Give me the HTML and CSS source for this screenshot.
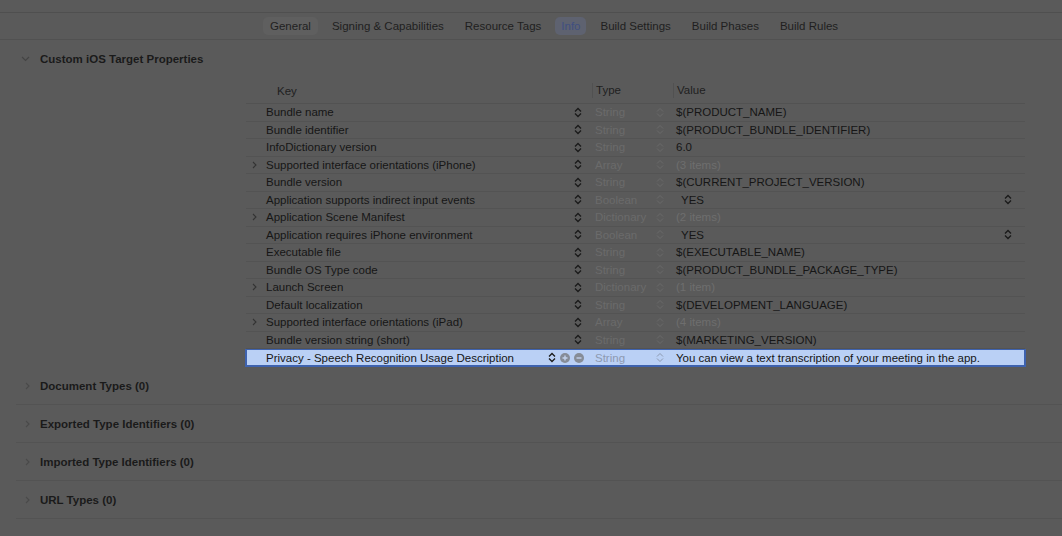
FILE: index.html
```html
<!DOCTYPE html>
<html>
<head>
<meta charset="utf-8">
<link rel="stylesheet" href="styles.css">
</head>
<body>
<div class="topstrip"></div>
<nav class="tabs">
  <span class="tab pill">General</span>
  <span class="tab">Signing &amp; Capabilities</span>
  <span class="tab">Resource Tags</span>
  <span class="tab pill info">Info</span>
  <span class="tab">Build Settings</span>
  <span class="tab">Build Phases</span>
  <span class="tab">Build Rules</span>
</nav>

<section class="custom">
  <div class="sechead">
    <svg class="chev-down" width="9" height="6" viewBox="0 0 9 6"><path d="M1 1 L4.5 4.5 L8 1" fill="none" stroke="#444" stroke-width="1.2"/></svg>
    <span class="sectitle">Custom iOS Target Properties</span>
  </div>

  <div class="table">
    <div class="thead">
      <div class="hkey">Key</div>
      <div class="htype">Type</div>
      <div class="hval">Value</div>
    </div>

    <div class="row"><div class="key"><span class="disc"></span><span class="ktext">Bundle name</span><span class="ctl"><svg class="step" width="8" height="11" viewBox="0 0 8 11"><path d="M1 4.5L4 1.5L7 4.5M1 6.5L4 9.5L7 6.5"/></svg></span></div><div class="type"><span>String</span><svg class="step faded" width="8" height="11" viewBox="0 0 8 11"><path d="M1 4.5L4 1.5L7 4.5M1 6.5L4 9.5L7 6.5"/></svg></div><div class="val">$(PRODUCT_NAME)</div></div>

    <div class="row"><div class="key"><span class="disc"></span><span class="ktext">Bundle identifier</span><span class="ctl"><svg class="step" width="8" height="11" viewBox="0 0 8 11"><path d="M1 4.5L4 1.5L7 4.5M1 6.5L4 9.5L7 6.5"/></svg></span></div><div class="type"><span>String</span><svg class="step faded" width="8" height="11" viewBox="0 0 8 11"><path d="M1 4.5L4 1.5L7 4.5M1 6.5L4 9.5L7 6.5"/></svg></div><div class="val">$(PRODUCT_BUNDLE_IDENTIFIER)</div></div>

    <div class="row"><div class="key"><span class="disc"></span><span class="ktext">InfoDictionary version</span><span class="ctl"><svg class="step" width="8" height="11" viewBox="0 0 8 11"><path d="M1 4.5L4 1.5L7 4.5M1 6.5L4 9.5L7 6.5"/></svg></span></div><div class="type"><span>String</span><svg class="step faded" width="8" height="11" viewBox="0 0 8 11"><path d="M1 4.5L4 1.5L7 4.5M1 6.5L4 9.5L7 6.5"/></svg></div><div class="val">6.0</div></div>

    <div class="row"><div class="key"><span class="disc"><svg width="5" height="8" viewBox="0 0 5 8"><path d="M1 1L4 4L1 7" fill="none" stroke="#333" stroke-width="1.1"/></svg></span><span class="ktext">Supported interface orientations (iPhone)</span><span class="ctl"><svg class="step" width="8" height="11" viewBox="0 0 8 11"><path d="M1 4.5L4 1.5L7 4.5M1 6.5L4 9.5L7 6.5"/></svg></span></div><div class="type"><span>Array</span><svg class="step faded" width="8" height="11" viewBox="0 0 8 11"><path d="M1 4.5L4 1.5L7 4.5M1 6.5L4 9.5L7 6.5"/></svg></div><div class="val muted">(3 items)</div></div>

    <div class="row"><div class="key"><span class="disc"></span><span class="ktext">Bundle version</span><span class="ctl"><svg class="step" width="8" height="11" viewBox="0 0 8 11"><path d="M1 4.5L4 1.5L7 4.5M1 6.5L4 9.5L7 6.5"/></svg></span></div><div class="type"><span>String</span><svg class="step faded" width="8" height="11" viewBox="0 0 8 11"><path d="M1 4.5L4 1.5L7 4.5M1 6.5L4 9.5L7 6.5"/></svg></div><div class="val">$(CURRENT_PROJECT_VERSION)</div></div>

    <div class="row"><div class="key"><span class="disc"></span><span class="ktext">Application supports indirect input events</span><span class="ctl"><svg class="step" width="8" height="11" viewBox="0 0 8 11"><path d="M1 4.5L4 1.5L7 4.5M1 6.5L4 9.5L7 6.5"/></svg></span></div><div class="type"><span>Boolean</span><svg class="step faded" width="8" height="11" viewBox="0 0 8 11"><path d="M1 4.5L4 1.5L7 4.5M1 6.5L4 9.5L7 6.5"/></svg></div><div class="val bool"><span>YES</span><svg class="step" width="8" height="11" viewBox="0 0 8 11"><path d="M1 4.5L4 1.5L7 4.5M1 6.5L4 9.5L7 6.5"/></svg></div></div>

    <div class="row"><div class="key"><span class="disc"><svg width="5" height="8" viewBox="0 0 5 8"><path d="M1 1L4 4L1 7" fill="none" stroke="#333" stroke-width="1.1"/></svg></span><span class="ktext">Application Scene Manifest</span><span class="ctl"><svg class="step" width="8" height="11" viewBox="0 0 8 11"><path d="M1 4.5L4 1.5L7 4.5M1 6.5L4 9.5L7 6.5"/></svg></span></div><div class="type"><span>Dictionary</span><svg class="step faded" width="8" height="11" viewBox="0 0 8 11"><path d="M1 4.5L4 1.5L7 4.5M1 6.5L4 9.5L7 6.5"/></svg></div><div class="val muted">(2 items)</div></div>

    <div class="row"><div class="key"><span class="disc"></span><span class="ktext">Application requires iPhone environment</span><span class="ctl"><svg class="step" width="8" height="11" viewBox="0 0 8 11"><path d="M1 4.5L4 1.5L7 4.5M1 6.5L4 9.5L7 6.5"/></svg></span></div><div class="type"><span>Boolean</span><svg class="step faded" width="8" height="11" viewBox="0 0 8 11"><path d="M1 4.5L4 1.5L7 4.5M1 6.5L4 9.5L7 6.5"/></svg></div><div class="val bool"><span>YES</span><svg class="step" width="8" height="11" viewBox="0 0 8 11"><path d="M1 4.5L4 1.5L7 4.5M1 6.5L4 9.5L7 6.5"/></svg></div></div>

    <div class="row"><div class="key"><span class="disc"></span><span class="ktext">Executable file</span><span class="ctl"><svg class="step" width="8" height="11" viewBox="0 0 8 11"><path d="M1 4.5L4 1.5L7 4.5M1 6.5L4 9.5L7 6.5"/></svg></span></div><div class="type"><span>String</span><svg class="step faded" width="8" height="11" viewBox="0 0 8 11"><path d="M1 4.5L4 1.5L7 4.5M1 6.5L4 9.5L7 6.5"/></svg></div><div class="val">$(EXECUTABLE_NAME)</div></div>

    <div class="row"><div class="key"><span class="disc"></span><span class="ktext">Bundle OS Type code</span><span class="ctl"><svg class="step" width="8" height="11" viewBox="0 0 8 11"><path d="M1 4.5L4 1.5L7 4.5M1 6.5L4 9.5L7 6.5"/></svg></span></div><div class="type"><span>String</span><svg class="step faded" width="8" height="11" viewBox="0 0 8 11"><path d="M1 4.5L4 1.5L7 4.5M1 6.5L4 9.5L7 6.5"/></svg></div><div class="val">$(PRODUCT_BUNDLE_PACKAGE_TYPE)</div></div>

    <div class="row"><div class="key"><span class="disc"><svg width="5" height="8" viewBox="0 0 5 8"><path d="M1 1L4 4L1 7" fill="none" stroke="#333" stroke-width="1.1"/></svg></span><span class="ktext">Launch Screen</span><span class="ctl"><svg class="step" width="8" height="11" viewBox="0 0 8 11"><path d="M1 4.5L4 1.5L7 4.5M1 6.5L4 9.5L7 6.5"/></svg></span></div><div class="type"><span>Dictionary</span><svg class="step faded" width="8" height="11" viewBox="0 0 8 11"><path d="M1 4.5L4 1.5L7 4.5M1 6.5L4 9.5L7 6.5"/></svg></div><div class="val muted">(1 item)</div></div>

    <div class="row"><div class="key"><span class="disc"></span><span class="ktext">Default localization</span><span class="ctl"><svg class="step" width="8" height="11" viewBox="0 0 8 11"><path d="M1 4.5L4 1.5L7 4.5M1 6.5L4 9.5L7 6.5"/></svg></span></div><div class="type"><span>String</span><svg class="step faded" width="8" height="11" viewBox="0 0 8 11"><path d="M1 4.5L4 1.5L7 4.5M1 6.5L4 9.5L7 6.5"/></svg></div><div class="val">$(DEVELOPMENT_LANGUAGE)</div></div>

    <div class="row"><div class="key"><span class="disc"><svg width="5" height="8" viewBox="0 0 5 8"><path d="M1 1L4 4L1 7" fill="none" stroke="#333" stroke-width="1.1"/></svg></span><span class="ktext">Supported interface orientations (iPad)</span><span class="ctl"><svg class="step" width="8" height="11" viewBox="0 0 8 11"><path d="M1 4.5L4 1.5L7 4.5M1 6.5L4 9.5L7 6.5"/></svg></span></div><div class="type"><span>Array</span><svg class="step faded" width="8" height="11" viewBox="0 0 8 11"><path d="M1 4.5L4 1.5L7 4.5M1 6.5L4 9.5L7 6.5"/></svg></div><div class="val muted">(4 items)</div></div>

    <div class="row"><div class="key"><span class="disc"></span><span class="ktext">Bundle version string (short)</span><span class="ctl"><svg class="step" width="8" height="11" viewBox="0 0 8 11"><path d="M1 4.5L4 1.5L7 4.5M1 6.5L4 9.5L7 6.5"/></svg></span></div><div class="type"><span>String</span><svg class="step faded" width="8" height="11" viewBox="0 0 8 11"><path d="M1 4.5L4 1.5L7 4.5M1 6.5L4 9.5L7 6.5"/></svg></div><div class="val">$(MARKETING_VERSION)</div></div>

    <div class="row selected"><div class="key"><span class="disc"></span><span class="ktext">Privacy - Speech Recognition Usage Description</span><span class="ctl"><svg class="step" width="8" height="11" viewBox="0 0 8 11"><path d="M1 4.5L4 1.5L7 4.5M1 6.5L4 9.5L7 6.5"/></svg><svg class="circ" width="10" height="10" viewBox="0 0 10 10"><circle cx="5" cy="5" r="5" fill="#868c97"/><path d="M2.5 5H7.5M5 2.5V7.5" stroke="#c3d2ec" stroke-width="1.4"/></svg><svg class="circ" width="10" height="10" viewBox="0 0 10 10"><circle cx="5" cy="5" r="5" fill="#868c97"/><path d="M2.5 5H7.5" stroke="#c3d2ec" stroke-width="1.4"/></svg></span></div><div class="type"><span>String</span><svg class="step faded" width="8" height="11" viewBox="0 0 8 11"><path d="M1 4.5L4 1.5L7 4.5M1 6.5L4 9.5L7 6.5"/></svg></div><div class="val">You can view a text transcription of your meeting in the app.</div></div>
  </div>
</section>

<section class="collapsed">
  <div class="crow"><svg class="chev-right" width="5" height="8" viewBox="0 0 5 8"><path d="M1 1L4 4L1 7" fill="none" stroke="#4a4a4a" stroke-width="1.1"/></svg><span class="sectitle">Document Types (0)</span></div>
  <div class="crow"><svg class="chev-right" width="5" height="8" viewBox="0 0 5 8"><path d="M1 1L4 4L1 7" fill="none" stroke="#4a4a4a" stroke-width="1.1"/></svg><span class="sectitle">Exported Type Identifiers (0)</span></div>
  <div class="crow"><svg class="chev-right" width="5" height="8" viewBox="0 0 5 8"><path d="M1 1L4 4L1 7" fill="none" stroke="#4a4a4a" stroke-width="1.1"/></svg><span class="sectitle">Imported Type Identifiers (0)</span></div>
  <div class="crow"><svg class="chev-right" width="5" height="8" viewBox="0 0 5 8"><path d="M1 1L4 4L1 7" fill="none" stroke="#4a4a4a" stroke-width="1.1"/></svg><span class="sectitle">URL Types (0)</span></div>
</section>
</body>
</html>
```

FILE: styles.css
```css
html, body {
  margin: 0;
  padding: 0;
  background: #5a5a5a;
  font-family: "Liberation Sans", Arial, sans-serif;
  font-size: 11.5px;
  color: #161616;
  overflow: hidden;
  height: 536px;
}

.topstrip {
  height: 12px;
  border-bottom: 1px solid #4f4f4f;
}

.tabs {
  height: 26px;
  border-bottom: 1px solid #515151;
  display: flex;
  align-items: center;
  gap: 7px;
  padding-left: 263px;
}

.tab {
  padding: 0 7px;
  height: 18px;
  line-height: 18px;
  border-radius: 5px;
  color: #1f1f1f;
}

.tab.pill {
  background: #5f5f5f;
}

.tab.info {
  background: #5e6270;
  color: #3e4f80;
  padding: 0 6px;
}

.sechead {
  height: 38px;
  display: flex;
  align-items: center;
}

.chev-down {
  margin-left: 21px;
  margin-right: 10px;
}

.sectitle {
  font-weight: bold;
  color: #1a1a1a;
}

.table {
  margin: 3px 37px 0 246px;
}

.thead {
  height: 23px;
  padding-bottom: 3px;
  box-sizing: border-box;
  border-bottom: 1px solid #525252;
  display: flex;
  align-items: center;
  color: #1f1f1f;
}

.hkey {
  width: 315px;
  padding-left: 31px;
  box-sizing: content-box;
}

.htype {
  width: 77px;
  padding-left: 3px;
  border-left: 1px solid #515151;
  height: 15px;
  line-height: 15px;
}

.hval {
  padding-left: 3px;
  border-left: 1px solid #515151;
  height: 15px;
  line-height: 15px;
}

.row {
  height: 17.5px;
  display: flex;
  align-items: center;
  border-bottom: 1px solid #535353;
  box-sizing: border-box;
}

.key {
  width: 346px;
  display: flex;
  align-items: center;
  height: 100%;
}

.disc {
  width: 20px;
  display: flex;
  align-items: center;
  padding-left: 6px;
  box-sizing: border-box;
}

.ktext {
  flex: 1;
  white-space: nowrap;
}

.ctl {
  display: flex;
  align-items: center;
  gap: 4px;
  padding-right: 10px;
}

.step {
  display: block;
}

.step path {
  fill: none;
  stroke: #1a1a1a;
  stroke-width: 1.3;
}

.step.faded path {
  stroke: #6a6a6a;
  stroke-width: 1;
}

.type {
  width: 80px;
  display: flex;
  align-items: center;
  justify-content: space-between;
  padding: 0 8px 0 3px;
  box-sizing: border-box;
  color: #6b6b6b;
}

.val {
  flex: 1;
  padding-left: 4px;
  white-space: nowrap;
}

.val.muted {
  color: #6e6e6e;
}

.val.bool {
  display: flex;
  align-items: center;
  justify-content: space-between;
  padding-left: 9px;
  padding-right: 13px;
}

.row.selected {
  background: #bad0f5;
  border: 2px solid #3e62ae;
  border-top-width: 1px;
  height: 18px;
  margin-left: -1px;
  margin-right: -1px;
}

.row.selected .key {
  margin-left: -1px;
}

.row.selected .ctl {
  padding-right: 8px;
}

.row.selected .type {
  color: #8d99b0;
}

.row.selected .step.faded path {
  stroke: #8d99b0;
}

.crow {
  height: 37px;
  margin-left: 16px;
  border-bottom: 1px solid #535353;
  display: flex;
  align-items: center;
}

.chev-right {
  margin-left: 9px;
  margin-right: 10px;
}
```
